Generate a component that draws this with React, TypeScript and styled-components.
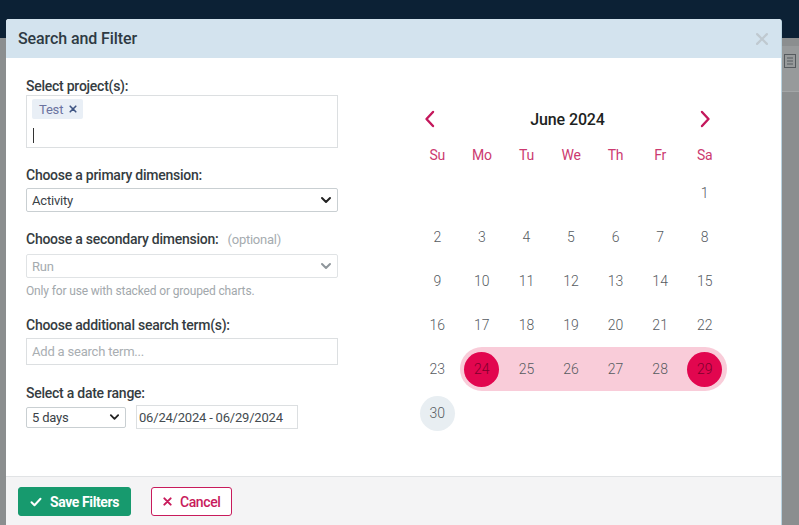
import React from "react"
import styled, { createGlobalStyle } from "styled-components"

const GlobalStyle = createGlobalStyle`
  html, body {
    margin: 0;
    padding: 0;
    width: 799px;
    height: 525px;
    overflow: hidden;
    font-family: Roboto, "Liberation Sans", sans-serif;
  }
  * {
    box-sizing: border-box;
  }
`

const Page = styled.div`
  position: relative;
  width: 799px;
  height: 525px;
  display: flex;
  flex-direction: column;
  background-color: #8b8e8f;
`

const TopBar = styled.div`
  height: 38px;
  flex-shrink: 0;
  background-color: #0c2135;
`

const BackContent = styled.div`
  flex: 1;
  display: flex;
  justify-content: flex-end;
  padding-top: 8px;
`

const SideStrip = styled.div`
  width: 18px;
  height: 46px;
  background-color: #979a9b;
  border-bottom: 1px solid #a3a6a7;
  display: flex;
  justify-content: center;
  padding-top: 8px;
  color: #555a5e;
`

const Modal = styled.div`
  position: absolute;
  top: 19px;
  left: 6px;
  width: 775px;
  bottom: 0;
  display: flex;
  flex-direction: column;
  background-color: #fff;
  border-radius: 3px 3px 0 0;
  overflow: hidden;
  box-shadow: 1px 0 0 #b9d3e0;
`

const ModalHeader = styled.div`
  height: 39px;
  flex-shrink: 0;
  display: flex;
  align-items: center;
  justify-content: space-between;
  padding: 0 12px 0 12px;
  background-color: #d3e3ee;
`

const Title = styled.h1`
  margin: 0;
  font-size: 16px;
  font-weight: 500;
  letter-spacing: -0.1px;
  color: #2e3a43;
`

const CloseButton = styled.button`
  border: none;
  background: none;
  padding: 0;
  width: 14px;
  height: 14px;
  display: flex;
  color: #bfc9d0;
  cursor: pointer;
`

const ModalBody = styled.div`
  height: 418px;
  flex-shrink: 0;
  display: flex;
  gap: 77px;
  padding: 19px 20px 0 20px;
`

const FormColumn = styled.div`
  width: 312px;
  display: flex;
  flex-direction: column;
`

const Field = styled.div<{ $gap?: number }>`
  display: flex;
  flex-direction: column;
  margin-bottom: ${(p) => p.$gap ?? 18}px;
`

const Label = styled.label<{ $space?: number }>`
  font-size: 14px;
  line-height: 18px;
  font-weight: 500;
  letter-spacing: -0.25px;
  color: #353c41;
  margin-bottom: ${(p) => p.$space ?? 4}px;
`

const Optional = styled.span`
  margin-left: 9px;
  font-size: 13px;
  font-weight: 400;
  color: #a6acb0;
`

const ProjectBox = styled.div`
  height: 53px;
  border: 1px solid #dcdfe1;
  padding: 3px 5px;
  display: flex;
  flex-direction: column;
  gap: 9px;
`

const Chip = styled.span`
  align-self: flex-start;
  display: inline-flex;
  align-items: center;
  gap: 6px;
  height: 20px;
  padding: 0 6px 0 7px;
  background-color: #e9eff6;
  border-radius: 2px;
  font-size: 13px;
  letter-spacing: -0.2px;
  color: #6b73a0;
`

const ChipRemove = styled.span`
  display: flex;
  color: #3f5583;
`

const Caret = styled.span`
  width: 1px;
  height: 15px;
  margin-left: 1px;
  background-color: #333;
`

const SelectWrap = styled.div<{ $width?: number }>`
  position: relative;
  width: ${(p) => (p.$width ? `${p.$width}px` : "100%")};
`

const Select = styled.select<{ $height?: number; $disabled?: boolean }>`
  appearance: none;
  width: 100%;
  height: ${(p) => p.$height ?? 24}px;
  margin: 0;
  padding: 0 24px 0 5px;
  border: 1px solid ${(p) => (p.$disabled ? "#e0e3e5" : "#c9cfd2")};
  border-radius: 2px;
  background-color: #fff;
  font-family: Roboto, "Liberation Sans", sans-serif;
  font-size: 13px;
  letter-spacing: -0.2px;
  color: ${(p) => (p.$disabled ? "#a5abaf" : "#3a4247")};
`

const Chevron = styled.span<{ $muted?: boolean }>`
  position: absolute;
  right: 6px;
  top: 50%;
  transform: translateY(-50%);
  display: flex;
  pointer-events: none;
  color: ${(p) => (p.$muted ? "#8f969b" : "#222")};
`

const HelpText = styled.div`
  margin-top: 5px;
  font-size: 12px;
  line-height: 16px;
  letter-spacing: -0.15px;
  color: #a2a8ac;
`

const TextInput = styled.input<{ $width?: number; $height?: number; $inset?: number }>`
  width: ${(p) => (p.$width ? `${p.$width}px` : "100%")};
  height: ${(p) => p.$height ?? 27}px;
  margin: 0;
  padding: 0 ${(p) => p.$inset ?? 5}px;
  border: 1px solid #dcdfe1;
  border-radius: 0;
  font-family: Roboto, "Liberation Sans", sans-serif;
  font-size: 13px;
  letter-spacing: -0.2px;
  color: #444b50;
  &::placeholder {
    color: #a9aeb2;
  }
`

const DateRow = styled.div`
  display: flex;
  align-items: center;
  gap: 10px;
`

const CalendarColumn = styled.div`
  width: 312px;
  padding-top: 30px;
  display: flex;
  flex-direction: column;
`

const CalendarHeader = styled.div`
  display: flex;
  align-items: center;
  justify-content: space-between;
  height: 24px;
  padding: 0 15px 0 8px;
  margin-bottom: 14px;
`

const NavButton = styled.button`
  border: none;
  background: none;
  padding: 0;
  display: flex;
  color: #c4185c;
  cursor: pointer;
`

const MonthTitle = styled.div`
  font-size: 16px;
  font-weight: 500;
  letter-spacing: -0.1px;
  color: #1d1f22;
`

const Grid = styled.div`
  display: grid;
  grid-template-columns: repeat(7, 1fr);
`

const WeekDay = styled.div`
  height: 20px;
  display: flex;
  align-items: center;
  justify-content: center;
  font-size: 14px;
  letter-spacing: -0.2px;
  color: #cc3a70;
  margin-bottom: 6px;
`

const DayCell = styled.div<{ $inRange?: boolean; $start?: boolean; $end?: boolean }>`
  height: 44px;
  display: flex;
  align-items: center;
  justify-content: center;
  background-color: ${(p) => (p.$inRange ? "#f9ccd9" : "transparent")};
  border-radius: ${(p) =>
    p.$start ? "22px 0 0 22px" : p.$end ? "0 22px 22px 0" : "0"};
`

const DayNumber = styled.span<{ $selected?: boolean; $today?: boolean }>`
  width: 35px;
  height: 35px;
  border-radius: 50%;
  display: flex;
  align-items: center;
  justify-content: center;
  font-size: 14px;
  font-weight: 300;
  color: ${(p) => (p.$selected ? "#80002c" : "#565b5f")};
  background-color: ${(p) =>
    p.$selected ? "#e2064f" : p.$today ? "#e8eef2" : "transparent"};
`

const ModalFooter = styled.div`
  flex: 1;
  display: flex;
  align-items: flex-start;
  gap: 20px;
  padding: 10px 12px;
  border-top: 1px solid #e1e3e5;
  background-color: #f4f4f5;
`

const Button = styled.button<{ $variant: "primary" | "danger" }>`
  height: 29px;
  display: inline-flex;
  align-items: center;
  gap: 8px;
  padding: 0 ${(p) => (p.$variant === "primary" ? 11 : 11)}px;
  border-radius: 3px;
  border: 1px solid ${(p) => (p.$variant === "primary" ? "#179a6e" : "#c81b5c")};
  background-color: ${(p) => (p.$variant === "primary" ? "#179a6e" : "#fff")};
  color: ${(p) => (p.$variant === "primary" ? "#fff" : "#c81b5c")};
  font-family: Roboto, "Liberation Sans", sans-serif;
  font-size: 14px;
  font-weight: ${(p) => (p.$variant === "primary" ? 700 : 500)};
  letter-spacing: -0.4px;
  cursor: pointer;
`

const weekDays = ["Su", "Mo", "Tu", "We", "Th", "Fr", "Sa"]

const ChevronDown = ({ size = 12 }: { size?: number }) => (
  <svg width={size} height={size} viewBox="0 0 12 12" fill="none">
    <path d="M2 4l4 4 4-4" stroke="currentColor" strokeWidth="2" strokeLinecap="round" strokeLinejoin="round" />
  </svg>
)

const Cross = ({ size = 10, width = 2 }: { size?: number; width?: number }) => (
  <svg width={size} height={size} viewBox="0 0 10 10" fill="none">
    <path d="M1.5 1.5l7 7M8.5 1.5l-7 7" stroke="currentColor" strokeWidth={width} strokeLinecap="round" />
  </svg>
)

const Calendar = () => {
  // June 2024 starts on a Saturday
  const cells: (number | null)[] = [...Array(6).fill(null), ...Array.from({ length: 30 }, (_, i) => i + 1)]
  const rangeStart = 24
  const rangeEnd = 29

  return (
    <CalendarColumn>
      <CalendarHeader>
        <NavButton aria-label="Previous month">
          <svg width="14" height="18" viewBox="0 0 14 18" fill="none">
            <path d="M10 2L3.5 9l6.5 7" stroke="currentColor" strokeWidth="2.4" strokeLinecap="round" strokeLinejoin="round" />
          </svg>
        </NavButton>
        <MonthTitle>June 2024</MonthTitle>
        <NavButton aria-label="Next month">
          <svg width="14" height="18" viewBox="0 0 14 18" fill="none">
            <path d="M4 2l6.5 7L4 16" stroke="currentColor" strokeWidth="2.4" strokeLinecap="round" strokeLinejoin="round" />
          </svg>
        </NavButton>
      </CalendarHeader>
      <Grid>
        {weekDays.map((d) => (
          <WeekDay key={d}>{d}</WeekDay>
        ))}
        {cells.map((day, i) => {
          if (day === null) return <DayCell key={`e${i}`} />
          const inRange = day >= rangeStart && day <= rangeEnd
          const selected = day === rangeStart || day === rangeEnd
          return (
            <DayCell key={day} $inRange={inRange} $start={day === rangeStart} $end={day === rangeEnd}>
              <DayNumber $selected={selected} $today={day === 30}>
                {day}
              </DayNumber>
            </DayCell>
          )
        })}
      </Grid>
    </CalendarColumn>
  )
}

export default function App() {
  return (
    <>
      <GlobalStyle />
      <Page>
        <TopBar />
        <BackContent>
          <SideStrip>
            <svg width="12" height="14" viewBox="0 0 12 14" fill="none">
              <rect x="0.5" y="0.5" width="11" height="13" stroke="currentColor" />
              <path d="M3 4h6M3 7h6M3 10h6" stroke="currentColor" />
            </svg>
          </SideStrip>
        </BackContent>
        <Modal>
          <ModalHeader>
            <Title>Search and Filter</Title>
            <CloseButton aria-label="Close">
              <Cross size={14} width={1.6} />
            </CloseButton>
          </ModalHeader>
          <ModalBody>
            <FormColumn>
              <Field>
                <Label $space={0}>Select project(s):</Label>
                <ProjectBox>
                  <Chip>
                    Test
                    <ChipRemove>
                      <Cross size={8} width={2} />
                    </ChipRemove>
                  </Chip>
                  <Caret />
                </ProjectBox>
              </Field>
              <Field>
                <Label>Choose a primary dimension:</Label>
                <SelectWrap>
                  <Select defaultValue="activity">
                    <option value="activity">Activity</option>
                  </Select>
                  <Chevron>
                    <ChevronDown />
                  </Chevron>
                </SelectWrap>
              </Field>
              <Field $gap={17}>
                <Label $space={5}>
                  Choose a secondary dimension:
                  <Optional>(optional)</Optional>
                </Label>
                <SelectWrap>
                  <Select $disabled defaultValue="run">
                    <option value="run">Run</option>
                  </Select>
                  <Chevron $muted>
                    <ChevronDown />
                  </Chevron>
                </SelectWrap>
                <HelpText>Only for use with stacked or grouped charts.</HelpText>
              </Field>
              <Field $gap={19}>
                <Label>Choose additional search term(s):</Label>
                <TextInput placeholder="Add a search term..." />
              </Field>
              <Field>
                <Label $space={3}>Select a date range:</Label>
                <DateRow>
                  <SelectWrap $width={100}>
                    <Select $height={21} defaultValue="5">
                      <option value="5">5 days</option>
                    </Select>
                    <Chevron>
                      <ChevronDown size={11} />
                    </Chevron>
                  </SelectWrap>
                  <TextInput $width={162} $height={24} $inset={2} defaultValue="06/24/2024 - 06/29/2024" />
                </DateRow>
              </Field>
            </FormColumn>
            <Calendar />
          </ModalBody>
          <ModalFooter>
            <Button $variant="primary">
              <svg width="12" height="10" viewBox="0 0 12 10" fill="none">
                <path d="M1.5 5.2l3 3L10.5 1.8" stroke="currentColor" strokeWidth="2" strokeLinecap="round" strokeLinejoin="round" />
              </svg>
              Save Filters
            </Button>
            <Button $variant="danger">
              <Cross size={9} width={2.2} />
              Cancel
            </Button>
          </ModalFooter>
        </Modal>
      </Page>
    </>
  )
}
